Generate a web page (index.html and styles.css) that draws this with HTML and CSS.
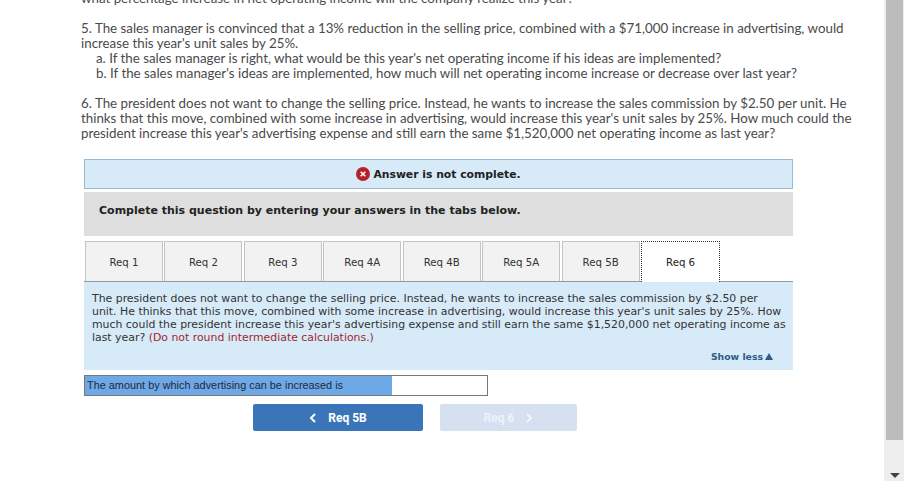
FILE: index.html
```html
<!DOCTYPE html>
<html lang="en">
<head>
  <meta charset="UTF-8">
  <title>Req 6</title>
  <link rel="stylesheet" href="styles.css">
</head>
<body>
  <div class="page">
    <div class="main-content">
      <div class="question">
        <p class="clipped">what percentage increase in net operating income will the company realize this year?</p>
        <p class="lead">5. The sales manager is convinced that a 13% reduction in the selling price, combined with a $71,000 increase in advertising, would increase this year's unit sales by 25%.</p>
        <p class="sub">a. If the sales manager is right, what would be this year's net operating income if his ideas are implemented?</p>
        <p class="sub last">b. If the sales manager's ideas are implemented, how much will net operating income increase or decrease over last year?</p>
        <p>6. The president does not want to change the selling price. Instead, he wants to increase the sales commission by $2.50 per unit. He thinks that this move, combined with some increase in advertising, would increase this year's unit sales by 25%. How much could the president increase this year's advertising expense and still earn the same $1,520,000 net operating income as last year?</p>
      </div>

      <div class="answer-box">
        <div class="answer-banner">
          <svg class="error-icon" width="14" height="14" viewBox="0 0 14 14">
            <circle cx="7" cy="7" r="7" fill="#b5212b"/>
            <path d="M4.7 4.7l4.6 4.6M9.3 4.7l-4.6 4.6" stroke="#fff" stroke-width="1.6"/>
          </svg>
          <span>Answer is not complete.</span>
        </div>
        <div class="instructions">Complete this question by entering your answers in the tabs below.</div>

        <div class="tabs">
          <div class="tab">Req 1</div>
          <div class="tab">Req 2</div>
          <div class="tab">Req 3</div>
          <div class="tab">Req 4A</div>
          <div class="tab">Req 4B</div>
          <div class="tab">Req 5A</div>
          <div class="tab">Req 5B</div>
          <div class="tab active">Req 6</div>
        </div>

        <div class="tab-panel">
          <p>The president does not want to change the selling price. Instead, he wants to increase the sales commission by $2.50 per<br>unit. He thinks that this move, combined with some increase in advertising, would increase this year's unit sales by 25%. How<br>much could the president increase this year's advertising expense and still earn the same $1,520,000 net operating income as<br>last year? <span class="note">(Do not round intermediate calculations.)</span></p>
          <div class="show-less">Show less<span class="arrow"></span></div>
        </div>

        <div class="answer-row">
          <div class="answer-label">The amount by which advertising can be increased is</div>
          <div class="answer-input"></div>
        </div>

        <div class="nav-buttons">
          <div class="nav-btn prev">
            <svg width="8" height="10" viewBox="0 0 8 10"><path d="M6 1L2 5l4 4" fill="none" stroke="#fff" stroke-width="2"/></svg>
            <span>Req 5B</span>
          </div>
          <div class="nav-btn next">
            <span>Req 6</span>
            <svg width="8" height="10" viewBox="0 0 8 10"><path d="M2 1l4 4-4 4" fill="none" stroke="#fff" stroke-width="2"/></svg>
          </div>
        </div>
      </div>
    </div>

    <div class="scrollbar">
      <div class="scroll-thumb"></div>
      <div class="scroll-arrow"></div>
    </div>
  </div>
</body>
</html>
```
FILE: styles.css
```css
* {
  box-sizing: border-box;
}

html, body {
  margin: 0;
  height: 481px;
  overflow: hidden;
  background-color: #fff;
}

.page {
  display: flex;
  height: 481px;
  padding-right: 15px;
}

.main-content {
  flex: 1;
  min-width: 0;
  overflow: hidden;
  padding-left: 81px;
}

.question {
  font-family: Lato, "Open Sans", sans-serif;
  font-size: 13.33px;
  line-height: 15px;
  color: #4a4a4a;
  width: 780px;
  margin-top: -9px;
}

.question p {
  margin: 0 0 15px;
}

.question p.lead {
  margin-bottom: 0;
}

.question p.sub {
  margin: 0;
  padding-left: 15px;
}

.question p.sub.last {
  margin-bottom: 15px;
}

.answer-box {
  width: 709px;
  margin: 18px 0 0 3px;
  font-family: "DejaVu Sans", Verdana, sans-serif;
  font-size: 10.9px;
  color: #333;
}

.answer-banner {
  display: flex;
  align-items: center;
  justify-content: center;
  gap: 3px;
  height: 30px;
  background-color: #d7eaf8;
  border: 1px solid #9db9cf;
  font-weight: bold;
  font-size: 10.8px;
  color: #222;
}

.instructions {
  display: flex;
  align-items: center;
  height: 44px;
  margin-top: 3px;
  padding: 0 15px 8px;
  background-color: #dedede;
  font-weight: bold;
  font-size: 11px;
  color: #222;
}

.tabs {
  display: flex;
  gap: 1.45px;
  height: 41px;
  margin-top: 5px;
  padding-left: 1px;
  border-bottom: 1px solid #8f9ba3;
}

.tab {
  display: flex;
  align-items: center;
  justify-content: center;
  width: 78px;
  height: 40px;
  padding-top: 2px;
  background-color: #f2f2f2;
  border: 1px solid #c4c4c4;
  border-bottom: none;
  font-size: 10.2px;
  color: #333;
}

.tab.active {
  width: 79px;
  height: 41px;
  position: relative;
  z-index: 1;
  padding-top: 1px;
  background-color: #fff;
  border: 1px dotted #333;
  border-bottom: none;
  color: #222;
}

.tab-panel {
  height: 88px;
  padding: 10px 4px 0 8px;
  background-color: #d7eaf8;
  color: #333;
  line-height: 13px;
}

.tab-panel p {
  margin: 0;
}

.note {
  color: #a3262c;
}

.show-less {
  display: flex;
  align-items: center;
  justify-content: flex-end;
  gap: 2px;
  margin-top: 6px;
  padding-right: 16px;
  font-size: 9.3px;
  font-weight: bold;
  color: #2f5a86;
}

.arrow {
  width: 0;
  height: 0;
  border-left: 4px solid transparent;
  border-right: 4px solid transparent;
  border-bottom: 7px solid #2f5a86;
}

.answer-row {
  display: flex;
  width: 404px;
  height: 21px;
  margin-top: 5px;
  border: 1px solid #777;
}

.answer-label {
  width: 307px;
  padding-left: 2px;
  background-color: #6fa8e6;
  font-family: "Liberation Sans", Arial, sans-serif;
  font-size: 10.9px;
  line-height: 19px;
  color: #1f2a38;
}

.answer-input {
  flex: 1;
  background-color: #fff;
}

.nav-buttons {
  display: flex;
  gap: 17px;
  margin: 8px 0 0 169px;
}

.nav-btn {
  display: flex;
  align-items: center;
  justify-content: center;
  gap: 11px;
  height: 27px;
  border-radius: 2px;
  font-family: Roboto, Arial, sans-serif;
  font-size: 12px;
  font-weight: bold;
  color: #fff;
}

.nav-btn.prev {
  width: 170px;
  background-color: #3a75b9;
}

.nav-btn.next {
  width: 137px;
  background-color: #d5e1f0;
  color: #edf2f8;
}

.nav-btn.next svg {
  opacity: 0.7;
}

.scrollbar {
  position: relative;
  width: 20px;
  padding: 0 1px 0 2px;
  background-color: #eee;
}

.scroll-thumb {
  height: 440px;
  background-color: #bcbcbc;
}

.scroll-arrow {
  position: absolute;
  bottom: 3px;
  left: 6px;
  width: 0;
  height: 0;
  border-left: 5px solid transparent;
  border-right: 5px solid transparent;
  border-top: 5px solid #444;
}
```
